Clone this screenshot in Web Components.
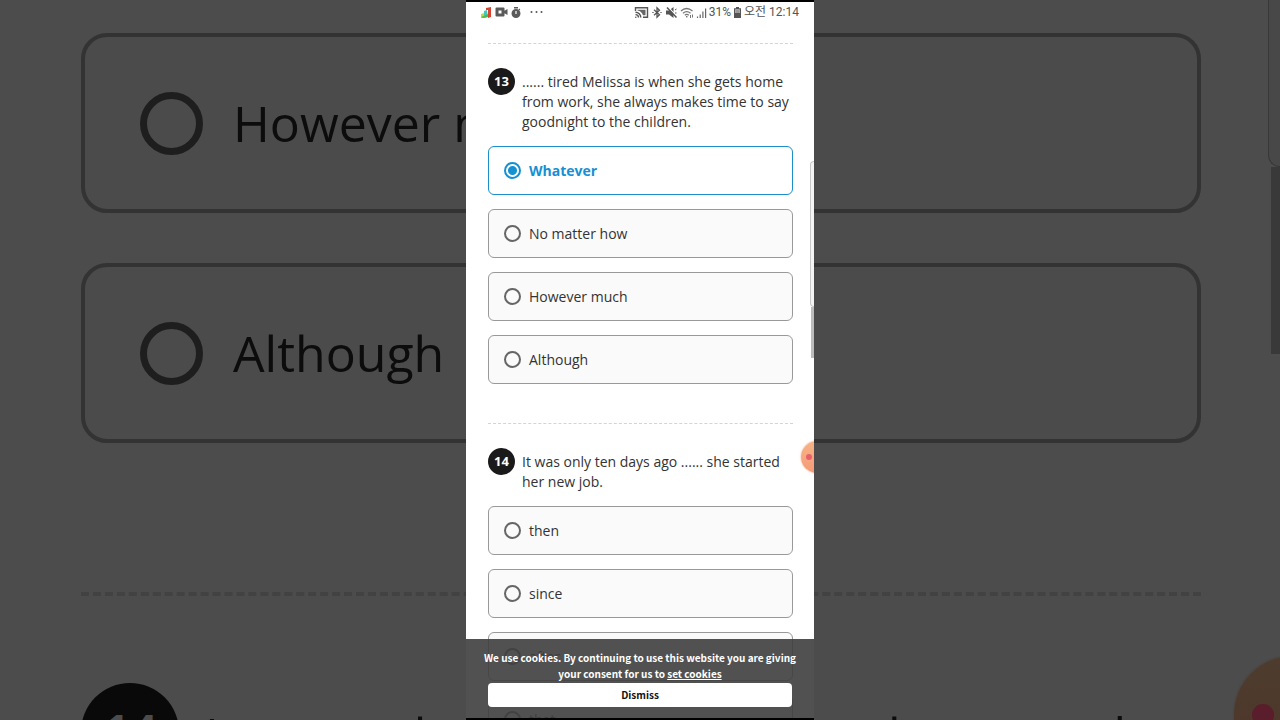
<!DOCTYPE html>
<html lang="en">
<head>
<meta charset="UTF-8">
<meta name="viewport" content="width=device-width, initial-scale=1">
<title>Grammar quiz</title>
<style>
    body {
        margin: 0;
        background: #4c4c4c;
        font-family: "Open Sans", "Noto Sans", sans-serif;
    }
</style>
</head>
<body>
<quiz-stage>
    <quiz-backdrop slot="backdrop" aria-hidden="true" inert>
        <quiz-option>However much</quiz-option>
        <quiz-option>Although</quiz-option>
        <quiz-question slot="next" number="14">It was only ten days ago ...... she started her new job.</quiz-question>
    </quiz-backdrop>

    <phone-screen>
        <status-bar slot="status" battery="31%" time="오전 12:14"></status-bar>
        <quiz-question number="13">
            ...... tired Melissa is when she gets home from work, she always makes time to say goodnight to the children.
            <quiz-option slot="options" checked>Whatever</quiz-option>
            <quiz-option slot="options">No matter how</quiz-option>
            <quiz-option slot="options">However much</quiz-option>
            <quiz-option slot="options">Although</quiz-option>
        </quiz-question>
        <quiz-question number="14">
            It was only ten days ago ...... she started her new job.
            <quiz-option slot="options">then</quiz-option>
            <quiz-option slot="options">since</quiz-option>
            <quiz-option slot="options">after</quiz-option>
            <quiz-option slot="options">that</quiz-option>
        </quiz-question>
        <cookie-banner slot="banner"></cookie-banner>
    </phone-screen>
</quiz-stage>

<script>
/**
 * QuizStage
 * Puts the phone screen in the middle, over the enlarged backdrop.
 */
class QuizStage extends HTMLElement {
    constructor() {
        super();
        this.attachShadow({ mode: 'open' });
    }

    connectedCallback() {
        this.shadowRoot.innerHTML = `
            <style>
                :host {
                    display: grid;
                    grid-template: 100vh / minmax(0, 1fr);
                    overflow: hidden;
                }
                .layer {
                    grid-area: 1 / 1;
                    min-width: 0;
                    overflow: hidden;
                }
                main {
                    width: 100%;
                    max-width: 348px;
                    justify-self: center;
                    z-index: 1;
                }
            </style>
            <div class="layer"><slot name="backdrop"></slot></div>
            <main class="layer"><slot></slot></main>
        `;
    }
}

/**
 * QuizBackdrop
 * Large dimmed version of the quiz. Only sets sizes and colours, the parts are shared.
 */
class QuizBackdrop extends HTMLElement {
    constructor() {
        super();
        this.attachShadow({ mode: 'open' });
    }

    connectedCallback() {
        this.shadowRoot.innerHTML = `
            <style>
                :host {
                    --text-size: 50px;
                    --line: 76px;
                    --text-color: #0c0c0c;
                    --option-height: 180px;
                    --option-pad: 55px;
                    --option-bg: #4b4b4b;
                    --option-border: #333;
                    --option-border-width: 4px;
                    --option-radius: 26px;
                    --ring: 63px;
                    --ring-width: 7px;
                    --ring-color: #1e1e1e;
                    --ring-gap: 30px;
                    --badge: 98px;
                    --badge-size: 48px;
                    --badge-bg: #090909;
                    --badge-color: #4c4c4c;
                    --head-gap: 26px;
                    --head-pad: 14px;
                    --rule: 4px;
                    --rule-color: #424242;
                    --question-pad: 87px;
                    --panel-bg: #484848;
                    --panel-border: #383838;
                    --panel-width: 12px;
                    --panel-radius: 16px;
                    --thumb-width: 9px;
                    --thumb-color: #393939;
                    display: block;
                    position: relative;
                    height: 100%;
                    box-sizing: border-box;
                    padding: 33px 79px 0 81px;
                    overflow: hidden;
                    background: #4c4c4c;
                }
                .options {
                    display: grid;
                    gap: 50px;
                    margin-bottom: 149px;
                }
                side-handle {
                    position: absolute;
                    top: -370px;
                    right: 0;
                    height: 537px;
                    --thumb-length: 187px;
                }
                chat-bubble {
                    position: absolute;
                    right: -72px;
                    bottom: -54px;
                    --size: 118px;
                    --dot: 22px;
                    --dot-left: 18px;
                    --from: #4d3d2e;
                    --to: #4e3429;
                    --dot-color: #5a1d2b;
                }
            </style>
            <div class="options"><slot></slot></div>
            <slot name="next"></slot>
            <side-handle></side-handle>
            <chat-bubble></chat-bubble>
        `;
    }
}

/**
 * PhoneScreen
 * White screen with status bar, scrolled content and a banner at the bottom.
 */
class PhoneScreen extends HTMLElement {
    constructor() {
        super();
        this.attachShadow({ mode: 'open' });
    }

    connectedCallback() {
        this.shadowRoot.innerHTML = `
            <style>
                :host {
                    display: flex;
                    flex-direction: column;
                    position: relative;
                    height: 100%;
                    box-sizing: border-box;
                    border: solid #000;
                    border-width: 2px 0;
                    overflow: hidden;
                    background: #fff;
                }
                .content {
                    display: grid;
                    gap: 39px;
                    padding: 21px 21px 0 22px;
                }
                side-handle {
                    position: absolute;
                    top: 159px;
                    right: 0;
                    height: 146px;
                    --thumb-length: 51px;
                }
                chat-bubble {
                    position: absolute;
                    top: 439px;
                    right: -19px;
                }
                .banner {
                    position: absolute;
                    left: 0;
                    right: 0;
                    bottom: 0;
                }
            </style>
            <slot name="status"></slot>
            <div class="content"><slot></slot></div>
            <side-handle></side-handle>
            <chat-bubble></chat-bubble>
            <div class="banner"><slot name="banner"></slot></div>
        `;
    }
}

/**
 * StatusBar
 * Notification icons on the left, system icons and clock on the right.
 */
class StatusBar extends HTMLElement {
    constructor() {
        super();
        this.attachShadow({ mode: 'open' });
    }

    connectedCallback() {
        this.shadowRoot.innerHTML = `
            <style>
                :host {
                    display: flex;
                    justify-content: space-between;
                    align-items: center;
                    flex: none;
                    height: 20px;
                    padding: 0 15px 0 14px;
                    font: 12px/20px Roboto, "Noto Sans CJK KR", sans-serif;
                    color: #555;
                }
                div {
                    display: flex;
                    align-items: center;
                    gap: 2px;
                }
                .system span { white-space: nowrap; }
                svg { display: block; flex: none; }
                .more { margin-left: 6px; }
            </style>
            <div>
                <svg width="13" height="13" viewBox="0 0 13 13">
                    <path d="M1 8l3-1v5H1z" fill="#c9d93a"/>
                    <path d="M4 5l3-1 1 7-4 1z" fill="#43c8c0"/>
                    <path d="M6 2l5-1v10l-3 1V4H6z" fill="#d8432f"/>
                    <path d="M1 11l7-3v3l-5 1z" fill="#4fb95a"/>
                </svg>
                <svg width="13" height="12" viewBox="0 0 13 12" fill="#5a5a5a">
                    <path fill-rule="evenodd" d="M1.500 1.500h7q1 0 1 1v2.200L12.500 3v6L9.500 7.300V9.500q0 1-1 1h-7q-1 0-1-1v-7q0-1 1-1zM3.500 4.500v3h3v-3z"/>
                </svg>
                <svg width="12" height="13" viewBox="0 0 12 13" fill="#5a5a5a">
                    <path d="M4 1h4v1.500H4zM9.300 2.500l1 1-.9.900-1-1z"/>
                    <path fill-rule="evenodd" d="M6 3a4.500 4.500 0 1 1 0 9 4.500 4.500 0 0 1 0-9zm-.6 2v3h1.200V5z"/>
                </svg>
                <svg class="more" width="13" height="4" viewBox="0 0 13 4" fill="#555">
                    <circle cx="1.500" cy="2" r="1"/><circle cx="6.500" cy="2" r="1"/><circle cx="11.500" cy="2" r="1"/>
                </svg>
            </div>
            <div class="system">
                <svg width="15" height="13" viewBox="0 0 15 13" fill="none" stroke="#555" stroke-width="1.400">
                    <path d="M1.500 5V1.700h12v9.600H9"/>
                    <path d="M1.500 6.300a5.300 5.300 0 0 1 5.300 5.300M1.500 8.600a3 3 0 0 1 3 3"/>
                    <path d="M3.500 3.700h8v5.600H9A7 7 0 0 0 3.500 4.500z" fill="#666" stroke="none"/>
                    <circle cx="1.800" cy="11.300" r=".8" fill="#555" stroke="none"/>
                </svg>
                <svg width="12" height="13" viewBox="0 0 12 13" fill="none" stroke="#555" stroke-width="1.300">
                    <path d="M3 3.800l5.500 5L6 11.300V1.700l2.500 2.500L3 9.200"/>
                    <path d="M2 6v1M10 6v1"/>
                </svg>
                <svg width="13" height="13" viewBox="0 0 13 13">
                    <path d="M1 4.500h3L8.500 1v11L4 8.500H1z" fill="#555"/>
                    <path d="M3 1l9 9.500" stroke="#fff" stroke-width="1.200"/>
                    <path d="M2 1.500l9.500 10" stroke="#555" stroke-width="1.500"/>
                    <path d="M10 4l1.500-1M10 7h1.500" stroke="#555"/>
                </svg>
                <svg width="14" height="13" viewBox="0 0 14 13" fill="none" stroke="#777" stroke-width="1.300">
                    <path d="M1 5q5.500-5 11.500 0M3 7.300q3.700-3.300 7.500 0M4.800 9.200q2-1.700 4 0"/>
                    <circle cx="6.800" cy="10.800" r=".8" fill="#555" stroke="none"/>
                    <path d="M10.500 9v3M12.500 8.500v3" stroke-width="1"/>
                </svg>
                <svg width="11" height="13" viewBox="0 0 11 13" stroke="#666" stroke-width="1.200">
                    <path d="M1.500 12v-1.500M4.200 12V8.500M6.900 12V5.500M9.600 12V2.500"/>
                </svg>
                <span>${this.getAttribute('battery')}</span>
                <svg width="9" height="13" viewBox="1 0 9 13" fill="#555">
                    <path fill-rule="evenodd" d="M4 1h3v1.200h2V12H2V2.200h2zM3.300 3.500V7h4.400V3.500z"/>
                    <path d="M3.300 3.500h4.400V7H3.300z" fill="#999"/>
                </svg>
                <span>${this.getAttribute('time')}</span>
            </div>
        `;
    }
}

/**
 * QuizQuestion
 * Numbered question text with its options below.
 */
class QuizQuestion extends HTMLElement {
    constructor() {
        super();
        this.attachShadow({ mode: 'open' });
    }

    connectedCallback() {
        this.shadowRoot.innerHTML = `
            <style>
                :host {
                    display: block;
                    padding-top: var(--question-pad, 24px);
                    border-top: var(--rule, 1px) dashed var(--rule-color, #d4d4d4);
                }
                .head {
                    display: flex;
                    align-items: flex-start;
                    gap: var(--head-gap, 7px);
                    margin-bottom: 14px;
                    font-size: var(--text-size, 14px);
                    line-height: var(--line, 20px);
                    color: var(--text-color, #333);
                }
                .number {
                    flex: none;
                    width: var(--badge, 27px);
                    border-radius: 50%;
                    background: var(--badge-bg, #1a1a1a);
                    color: var(--badge-color, #fff);
                    font-size: var(--badge-size, 13px);
                    font-weight: 700;
                    line-height: var(--badge, 27px);
                    text-align: center;
                }
                p {
                    margin: 0;
                    padding-top: var(--head-pad, 4px);
                }
                .options {
                    display: grid;
                    gap: 14px;
                }
            </style>
            <div class="head">
                <span class="number">${this.getAttribute('number')}</span>
                <p id="text"><slot></slot></p>
            </div>
            <div class="options" role="radiogroup" aria-labelledby="text"><slot name="options"></slot></div>
        `;

        // Each radio lives in its own shadow root, so clear the others by hand
        this.addEventListener('option-picked', (e) => {
            this.querySelectorAll('quiz-option').forEach((option) => {
                option.toggleAttribute('checked', option === e.target);
            });
        });
    }
}

/**
 * QuizOption
 * One answer: a radio button and its label in a bordered box.
 */
class QuizOption extends HTMLElement {
    static get observedAttributes() {
        return ['checked'];
    }

    constructor() {
        super();
        this.attachShadow({ mode: 'open' });
    }

    connectedCallback() {
        this.shadowRoot.innerHTML = `
            <style>
                :host { display: block; }
                label {
                    display: flex;
                    align-items: center;
                    gap: var(--ring-gap, 8px);
                    min-height: var(--option-height, 49px);
                    box-sizing: border-box;
                    padding: 0 var(--option-pad, 15px);
                    border: var(--option-border-width, 1px) solid var(--option-border, #999);
                    border-radius: var(--option-radius, 6px);
                    background: var(--option-bg, #fafafa);
                    color: var(--text-color, #333);
                    font-size: var(--text-size, 14px);
                    line-height: var(--line, 20px);
                    cursor: pointer;
                }
                input {
                    appearance: none;
                    flex: none;
                    width: var(--ring, 17px);
                    height: var(--ring, 17px);
                    box-sizing: border-box;
                    margin: 0;
                    border: var(--ring-width, 2px) solid var(--ring-color, #666);
                    border-radius: 50%;
                }
                :host([checked]) label {
                    border-color: #1b8fc9;
                    background: #fff;
                    color: #1590d3;
                    font-weight: 700;
                }
                :host([checked]) input {
                    border-color: #1590d3;
                    background: radial-gradient(circle, #1590d3 4px, #fff 5px);
                }
            </style>
            <label><input type="radio"><span><slot></slot></span></label>
        `;
        this.input = this.shadowRoot.querySelector('input');
        this.input.checked = this.hasAttribute('checked');
        this.input.onchange = () => {
            this.dispatchEvent(new CustomEvent('option-picked', { bubbles: true }));
        };
    }

    attributeChangedCallback() {
        if (this.input) {
            this.input.checked = this.hasAttribute('checked');
        }
    }
}

/**
 * SideHandle
 * Edge panel handle with the scroll thumb showing under it.
 */
class SideHandle extends HTMLElement {
    constructor() {
        super();
        this.attachShadow({ mode: 'open' });
    }

    connectedCallback() {
        this.shadowRoot.innerHTML = `
            <style>
                :host {
                    display: block;
                    width: var(--panel-width, 4px);
                }
                .panel {
                    height: 100%;
                    border: 1px solid var(--panel-border, #c8c8c8);
                    border-right: 0;
                    border-radius: var(--panel-radius, 4px) 0 0 var(--panel-radius, 4px);
                    box-sizing: border-box;
                    background: var(--panel-bg, #f4f4f4);
                }
                .thumb {
                    width: var(--thumb-width, 3px);
                    height: var(--thumb-length);
                    margin-left: auto;
                    background: var(--thumb-color, #bcbcbc);
                }
            </style>
            <div class="panel"></div>
            <div class="thumb"></div>
        `;
    }
}

/**
 * ChatBubble
 * Round floating button, mostly past the right edge.
 */
class ChatBubble extends HTMLElement {
    constructor() {
        super();
        this.attachShadow({ mode: 'open' });
    }

    connectedCallback() {
        this.shadowRoot.innerHTML = `
            <style>
                :host {
                    display: flex;
                    align-items: center;
                    width: var(--size, 32px);
                    height: var(--size, 32px);
                    border-radius: 50%;
                    background: linear-gradient(var(--from, #f5b585), var(--to, #f59a78));
                    box-shadow: 0 0 2px var(--to, #f59a78);
                }
                i {
                    width: var(--dot, 6px);
                    height: var(--dot, 6px);
                    margin-left: var(--dot-left, 5px);
                    border-radius: 50%;
                    background: var(--dot-color, #e8606c);
                }
            </style>
            <i></i>
        `;
    }
}

/**
 * CookieBanner
 * Consent notice. Dismiss removes it.
 */
class CookieBanner extends HTMLElement {
    constructor() {
        super();
        this.attachShadow({ mode: 'open' });
    }

    connectedCallback() {
        this.shadowRoot.innerHTML = `
            <style>
                :host {
                    display: block;
                    padding: 11px 16px;
                    background: rgba(62, 62, 62, 0.9);
                    color: #fff;
                    font: 700 10px/16px "Noto Sans CJK KR", sans-serif;
                    text-align: center;
                }
                p { margin: 0 0 1px; }
                a { color: inherit; }
                button {
                    display: block;
                    width: calc(100% - 12px);
                    height: 24px;
                    margin: 0 auto;
                    padding: 0;
                    border: 0;
                    border-radius: 4px;
                    background: #fff;
                    color: #111;
                    font: inherit;
                    cursor: pointer;
                }
            </style>
            <p>We use cookies. By continuing to use this website you are giving your consent for us to <a href="#cookies">set cookies</a></p>
            <button type="button">Dismiss</button>
        `;
        this.shadowRoot.querySelector('button').onclick = () => this.remove();
    }
}

// Register Components
customElements.define('quiz-stage', QuizStage);
customElements.define('quiz-backdrop', QuizBackdrop);
customElements.define('phone-screen', PhoneScreen);
customElements.define('status-bar', StatusBar);
customElements.define('quiz-question', QuizQuestion);
customElements.define('quiz-option', QuizOption);
customElements.define('side-handle', SideHandle);
customElements.define('chat-bubble', ChatBubble);
customElements.define('cookie-banner', CookieBanner);
</script>
</body>
</html>
